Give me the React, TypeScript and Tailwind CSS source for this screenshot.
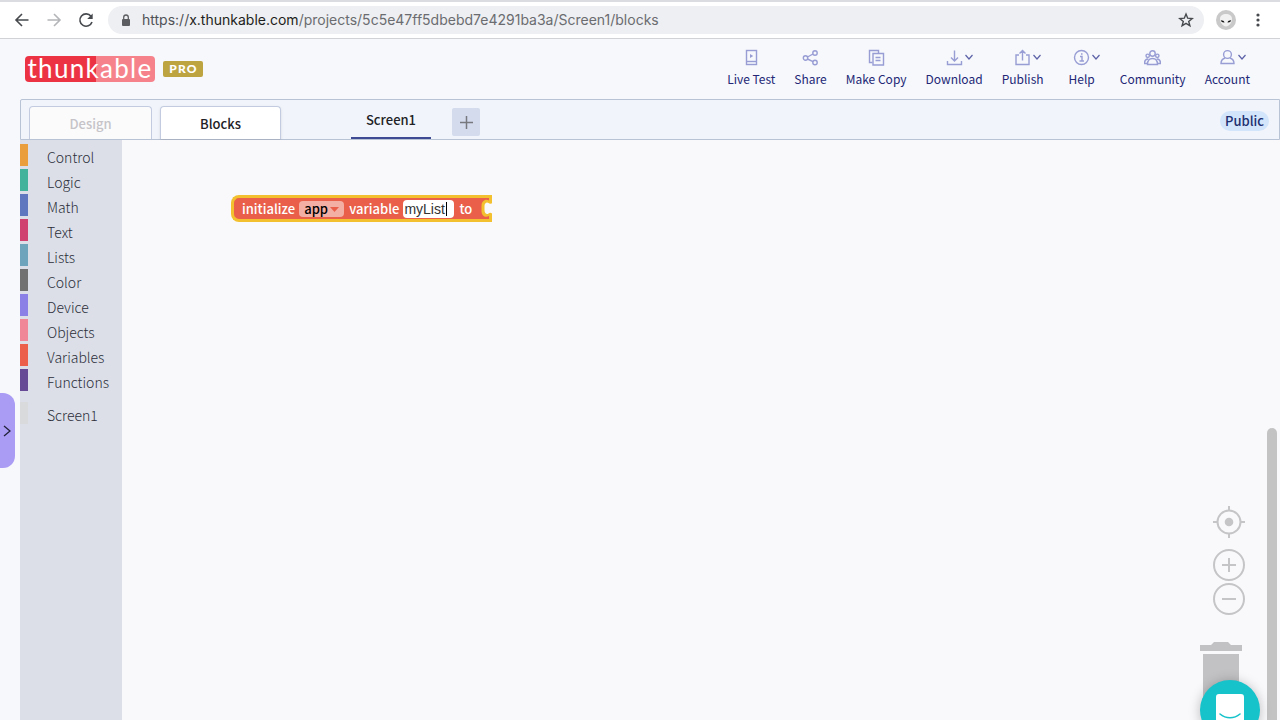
import { useState } from 'react';
import type { ReactNode } from 'react';
import { clsx } from 'clsx';

const CATEGORIES = [
  { name: 'Control',   color: 'bg-[#ea9f3c]' },
  { name: 'Logic',     color: 'bg-[#43b39c]' },
  { name: 'Math',      color: 'bg-[#5f77bf]' },
  { name: 'Text',      color: 'bg-[#d0426f]' },
  { name: 'Lists',     color: 'bg-[#6ea5bd]' },
  { name: 'Color',     color: 'bg-[#717171]' },
  { name: 'Device',    color: 'bg-[#8b80e6]' },
  { name: 'Objects',   color: 'bg-[#f08798]' },
  { name: 'Variables', color: 'bg-[#ec5f4a]' },
  { name: 'Functions', color: 'bg-[#664a95]' },
];

const ICONS: Record<string, ReactNode> = {
  live: (
    <>
      <rect x="3.5" y="1.5" width="10" height="14" />
      <path d="M3.5 12.5h10" />
      <path d="M7 5v4l3.200-2z" fill="currentColor" stroke="none" />
    </>
  ),
  share: (
    <>
      <circle cx="3.500" cy="9" r="2.200" />
      <circle cx="13" cy="4" r="2.200" />
      <circle cx="13" cy="13.500" r="2.200" />
      <path d="M5.500 8l5.500-3M5.500 10l5.500 2.700" />
    </>
  ),
  copy: (
    <>
      <path d="M4.500 13.500h-3v-12h9v2.500" />
      <path d="M5 4.500h10.500v11.500H5z" />
      <path d="M7.500 8.500h5M7.500 11.500h5" />
    </>
  ),
  download: <path d="M1.500 12v3.500h14V12M8.500 1.500v10.500M5 8.500l3.500 3.500L12 8.500" />,
  publish: <path d="M5 6H2v9.500h13V6h-3M8.500 11.500V1.500M5.500 4.500l3-3 3 3" />,
  help: (
    <>
      <circle cx="8.500" cy="8.500" r="7" />
      <path d="M7 7.500h2v4.500M6.500 12h4.500" />
      <path d="M8 4.300h1.500v1.500H8z" fill="currentColor" stroke="none" />
    </>
  ),
  community: (
    <>
      <circle cx="8.500" cy="4.500" r="2.700" />
      <circle cx="3.700" cy="6.800" r="1.700" />
      <circle cx="13.300" cy="6.800" r="1.700" />
      <path d="M3.500 15.500c0-4 2-6 5-6s5 2 5 6z" />
      <path d="M3.500 14.500H.5c0-3 1-4.500 3.800-4.500M13.500 14.500h3c0-3-1-4.500-3.800-4.500" />
    </>
  ),
  account: (
    <>
      <circle cx="8.500" cy="5.500" r="3.900" />
      <path d="M6 9c-2.800 1-4 3-4 5.500h13c0-2.500-1.200-4.500-4-5.500" />
    </>
  ),
};

const ACTIONS = [
  { label: 'Live Test', icon: 'live' },
  { label: 'Share',     icon: 'share' },
  { label: 'Make Copy', icon: 'copy' },
  { label: 'Download',  icon: 'download',  menu: true },
  { label: 'Publish',   icon: 'publish',   menu: true },
  { label: 'Help',      icon: 'help',      menu: true },
  { label: 'Community', icon: 'community' },
  { label: 'Account',   icon: 'account',   menu: true },
];

function BrowserBar() {
  return (
    <div className="flex h-[39px] shrink-0 items-center border-t-2 border-b border-t-[#dbdce1] border-b-[#d0d2d5] bg-white pr-5 pl-[14px] text-[#46494d]">
      <div className="flex items-center gap-4">
        <button aria-label="Back">
          <svg width="16" height="16" viewBox="0 0 16 16" fill="none" stroke="currentColor" strokeWidth="1.6">
            <path d="M14.500 8H2.500M8 2L2 8l6 6" />
          </svg>
        </button>
        <button aria-label="Forward" className="text-[#b4b5b8]">
          <svg width="16" height="16" viewBox="0 0 16 16" fill="none" stroke="currentColor" strokeWidth="1.6">
            <path d="M1.500 8h12M8 2l6 6-6 6" />
          </svg>
        </button>
        <button aria-label="Reload">
          <svg width="16" height="16" viewBox="0 0 16 16" fill="none" stroke="currentColor" strokeWidth="1.6">
            <path d="M13 4.200A6.200 6.200 0 1 0 14 10" />
            <path d="M14.700 1.500v5.500H9.200z" fill="currentColor" stroke="none" />
          </svg>
        </button>
      </div>
      <div className="ml-[14px] flex h-7 flex-1 items-center rounded-full bg-[#eeeff2] pr-[10px] pl-[13px]">
        <svg width="10" height="13" viewBox="0 0 10 13" fill="none" className="mr-[11px]">
          <rect x="1" y="5" width="8" height="7" rx="1" fill="#5b5d61" />
          <path d="M2.700 5.500V3.300a2.300 2.300 0 0 1 4.600 0v2.200" stroke="#5b5d61" strokeWidth="1.300" />
        </svg>
        <p className="flex-1 font-['Inter',sans-serif] text-sm text-[#6a6c70]">
          <span className="text-[#505257]">https://</span>
          <span className="text-[#1d1e20]">x.thunkable.com</span>
          /projects/5c5e47ff5dbebd7e4291ba3a/Screen1/blocks
        </p>
        <button aria-label="Bookmark">
          <svg width="16" height="16" viewBox="0 0 16 16" fill="none" stroke="currentColor" strokeWidth="1.4">
            <path d="M8 2l1.700 4.200 4.500.3-3.500 2.900 1.200 4.400L8 11.300l-3.900 2.500 1.200-4.400L1.800 6.500l4.500-.3z" />
          </svg>
        </button>
      </div>
      <button aria-label="Profile" className="ml-3">
        <svg width="20" height="20" viewBox="0 0 20 20">
          <circle cx="10" cy="10" r="10" fill="#c9c9ca" />
          <path d="M4 9c0-3.500 2.600-5 6-5s6 1.500 6 5-3 7.500-6 7.500S4 12.500 4 9z" fill="#f1f1f1" />
          <path d="M4.800 10.200c2 0 3.400.7 3.700 2.200-1.900.2-3.200-.6-3.700-2.200zM15.200 10.200c-2 0-3.400.7-3.700 2.200 1.900.2 3.200-.6 3.700-2.200z" fill="#111" />
        </svg>
      </button>
      <button aria-label="Browser menu" className="ml-5">
        <svg width="4" height="14" viewBox="0 0 4 14" fill="currentColor">
          <circle cx="2" cy="2" r="1.600" />
          <circle cx="2" cy="7" r="1.600" />
          <circle cx="2" cy="12" r="1.600" />
        </svg>
      </button>
    </div>
  );
}

function Header() {
  return (
    <header className="flex h-[60px] shrink-0 items-center justify-between pr-[30px] pl-[25px]">
      <a href="#" className="flex items-center gap-2">
        <span className="flex h-[26px] w-[130px] items-center justify-center rounded bg-linear-to-r from-[#ec3344] from-[55%] to-[#f6838b] to-[55%] pb-[3px] font-['Lato',sans-serif] text-[26px] leading-6 tracking-wider text-white">
          thunkable
        </span>
        <span className="flex h-4 w-10 items-center justify-center rounded-xs bg-[#bda440] pl-px font-['Lato',sans-serif] text-xs font-black tracking-widest text-white">
          PRO
        </span>
      </a>
      <nav className="flex gap-[19px]">
        {ACTIONS.map((a) => (
          <button key={a.label} className="flex flex-col items-center text-xs leading-5 text-[#232775]">
            <span className="relative mb-[3px] text-[#989dd4]">
              <svg width="17" height="17" viewBox="0 0 17 17" fill="none" stroke="currentColor" strokeWidth="1.4">
                {ICONS[a.icon]}
              </svg>
              {a.menu && (
                <svg
                  width="8" height="17" viewBox="0 0 8 17" fill="none" stroke="#5d62a8" strokeWidth="1.2"
                  className="absolute top-0 left-full ml-[2px]"
                >
                  <path d="M.5 6L4 10l3.500-4" />
                </svg>
              )}
            </span>
            <span className={clsx(a.label === 'Help' && 'px-[6px]')}>{a.label}</span>
          </button>
        ))}
      </nav>
    </header>
  );
}

function TabBar({ tab, onTab }: { tab: string; onTab: (t: string) => void }) {
  return (
    <div className="ml-5 flex h-[41px] shrink-0 items-end rounded-tl-xs border border-[#b9c3d6] bg-[#f1f5fb] pl-2 text-[13px] font-medium">
      <div className="flex gap-2">
        {['Design', 'Blocks'].map((t) => (
          <button
            key={t}
            onClick={() => onTab(t)}
            className={clsx(
              'h-[33px] rounded-t-sm border border-b-0 border-[#c3cbe0] pt-0.5',
              t === 'Design' ? 'w-[123px]' : 'w-[121px]',
              tab === t ? 'bg-white text-[#222226] shadow-sm' : 'bg-[#fbfbfc] text-[#c6c4c8]'
            )}
          >
            {t}
          </button>
        ))}
      </div>
      <button className="ml-[70px] h-[38px] w-20 border-b-2 border-[#3f4a94] pt-0.5 text-[#222226]">Screen1</button>
      <button aria-label="Add screen" className="mb-[3px] ml-[21px] flex size-7 items-center justify-center rounded-xs bg-[#d3dbed]">
        <svg width="13" height="13" viewBox="0 0 13 13" stroke="#77797f" strokeWidth="1.5">
          <path d="M6.500 0v13M0 6.500h13" />
        </svg>
      </button>
      <span className="mr-[10px] mb-2 ml-auto rounded-full bg-[#d2e5fb] px-[5px] leading-5 text-[#1d2f70]">Public</span>
    </div>
  );
}

function Swatch({ color }: { color: string }) {
  return <span className={clsx('mr-[19px] h-[22px] w-2', color)} />;
}

function Sidebar() {
  return (
    <aside className="w-[102px] shrink-0 bg-[#dcdfe8] pt-1 text-sm leading-[26px] font-light text-[#2b2e38]">
      <ul>
        {CATEGORIES.map((c) => (
          <li key={c.name} className="h-[25px]">
            <button className="flex">
              <Swatch color={c.color} />
              {c.name}
            </button>
          </li>
        ))}
      </ul>
      <button className="mt-2 flex">
        <Swatch color="bg-[#d9dadb]" />
        Screen1
      </button>
    </aside>
  );
}

function VariableBlock() {
  const [name, setName] = useState('myList');

  return (
    <div className="absolute top-[55px] left-[109px] flex h-[27px] text-[13px] font-medium text-white">
      <div className="flex items-center rounded-l-lg border-y-3 border-l-3 border-[#f3c02f] bg-[#e95f49] pl-2">
        <span>initialize</span>
        <span className="relative mr-[5px] ml-1 flex">
          <select aria-label="Variable scope" className="h-4 w-[45px] appearance-none rounded-sm bg-[#f4afa5] pl-[5px] leading-4 text-black">
            <option>app</option>
            <option>stored</option>
            <option>cloud</option>
          </select>
          <svg width="9" height="5" viewBox="0 0 9 5" fill="#e95f49" className="pointer-events-none absolute top-[6px] right-[5px]">
            <path d="M0 0h9L4.500 5z" />
          </svg>
        </span>
        <span>variable</span>
        <span className="relative mr-[5px] ml-1 flex">
          <input
            aria-label="Variable name"
            value={name}
            onChange={(e) => setName(e.target.value)}
            className="h-[18px] w-[51px] rounded-sm bg-white pl-px font-['Liberation_Sans',sans-serif] text-sm font-normal text-[#333] caret-transparent"
          />
          <span className="absolute top-[2px] right-[7px] h-[14px] w-px bg-black" />
        </span>
        <span className="pr-2">to</span>
      </div>
      {/* value socket */}
      <svg width="12" height="27" viewBox="0 0 12 27">
        <path d="M0 0h12v8c-1 1.200-2.500 1-3.500 0C7 6.500 4.500 8 4.500 11v4c0 3.500 2.500 5 4 3.500 1-1 2.500-1.200 3.500 0V27H0z" fill="#f3c02f" />
        <path d="M0 3h9v2.500C5.500 3.500 1.500 6 1.500 11v5c0 5 4 7 7.500 5v3H0z" fill="#e95f49" />
      </svg>
    </div>
  );
}

function Workspace() {
  return (
    <main className="relative flex-1 overflow-hidden bg-[#f9f9fc]">
      <VariableBlock />

      {/* zoom controls */}
      <div className="absolute top-[366px] right-[35px] flex flex-col text-[#c5c5c7]">
        <button aria-label="Center blocks" className="mb-[11px]">
          <svg width="32" height="32" viewBox="0 0 32 32" fill="none" stroke="currentColor" strokeWidth="2">
            <circle cx="16" cy="16" r="11.500" />
            <circle cx="16" cy="16" r="4.300" fill="currentColor" stroke="none" />
            <path d="M16 0v4M16 28v4M0 16h4M28 16h4" />
          </svg>
        </button>
        <button aria-label="Zoom in" className="mb-[2px]">
          <svg width="32" height="32" viewBox="0 0 32 32" fill="none" stroke="currentColor" strokeWidth="2">
            <circle cx="16" cy="16" r="15" />
            <path d="M16 9v14M9 16h14" />
          </svg>
        </button>
        <button aria-label="Zoom out">
          <svg width="32" height="32" viewBox="0 0 32 32" fill="none" stroke="currentColor" strokeWidth="2">
            <circle cx="16" cy="16" r="15" />
            <path d="M9 16h14" />
          </svg>
        </button>
      </div>

      <svg width="42" height="78" viewBox="0 0 42 78" fill="#c2c2c4" className="absolute top-[502px] right-[38px]">
        <path d="M0 3h11l3-3h14l3 3h11v6H0zM3 12h36v60H3z" />
      </svg>

      {/* scrollbar thumb */}
      <div className="absolute top-72 right-[3px] bottom-0 w-[10px] rounded-t-full bg-[#c3c3c4]" />
    </main>
  );
}

export default function App() {
  const [tab, setTab] = useState('Blocks');

  return (
    <div className="relative flex h-screen flex-col overflow-hidden bg-[#f6f8fc] font-['Noto_Sans_CJK_SC',sans-serif]">
      <BrowserBar />
      <Header />
      <TabBar tab={tab} onTab={setTab} />
      <div className="ml-5 flex min-h-0 flex-1">
        <Sidebar />
        <Workspace />
      </div>

      <button aria-label="Open preview" className="absolute top-[393px] left-0 flex h-[75px] w-[15px] items-center rounded-r-xl bg-[#aa9cf5] pl-[3px]">
        <svg width="8" height="12" viewBox="0 0 8 12" fill="none" stroke="#22223a" strokeWidth="1.3">
          <path d="M1 1l6 5-6 5" />
        </svg>
      </button>

      <button aria-label="Open chat" className="absolute right-5 -bottom-5 flex size-[60px] justify-center rounded-full bg-[#16c3ca] pt-[14px] shadow-[0_1px_12px_rgba(0,0,0,0.25)]">
        <svg width="28" height="32" viewBox="0 0 28 32" fill="none">
          <path d="M3 0h22a3 3 0 0 1 3 3v29l-6-4H3a3 3 0 0 1-3-3V3a3 3 0 0 1 3-3z" fill="#fff" />
          <path d="M4 20c6 5 14 5 20 0" stroke="#16c3ca" strokeWidth="1.6" strokeLinecap="round" />
        </svg>
      </button>
    </div>
  );
}
